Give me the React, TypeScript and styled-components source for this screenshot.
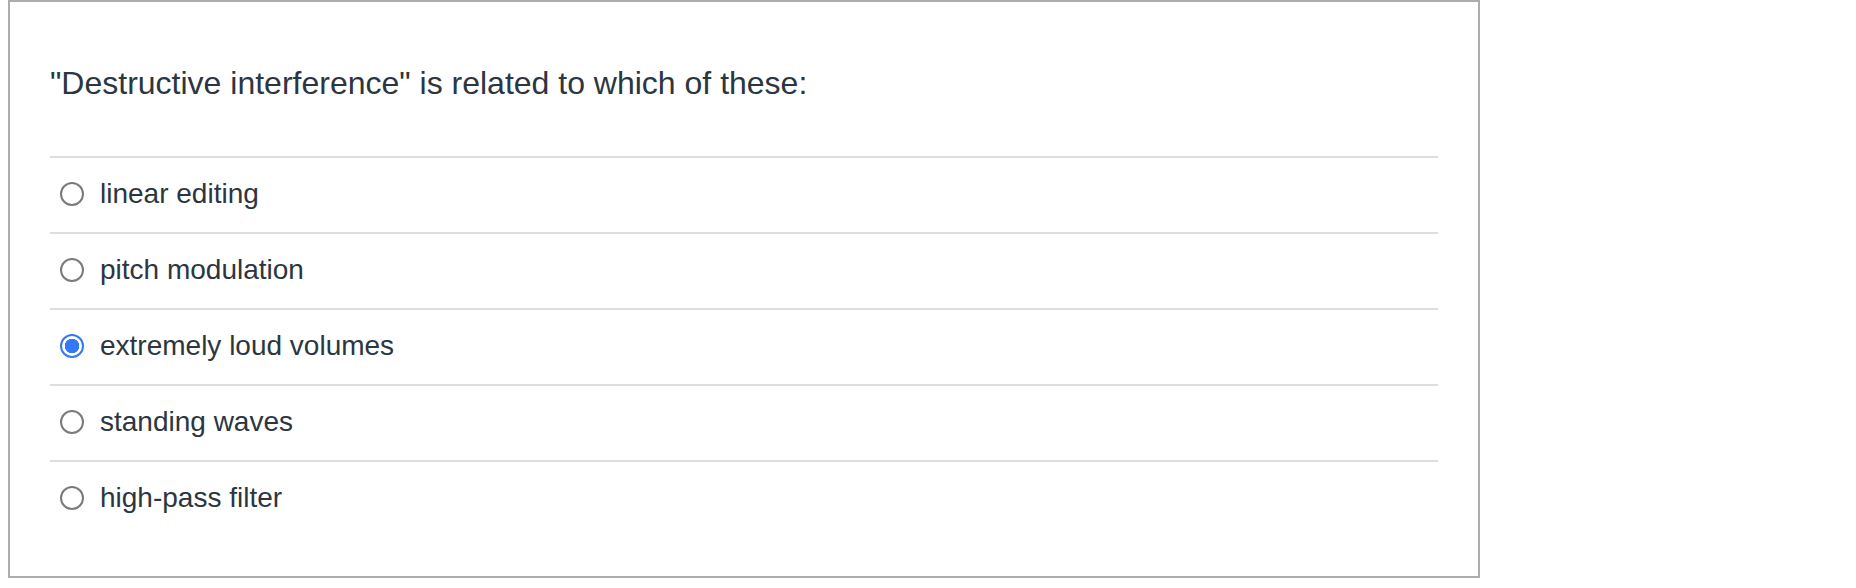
import React, { useState } from 'react';
import styled, { createGlobalStyle } from 'styled-components';

const GlobalStyle = createGlobalStyle`
  body {
    margin: 0 8px;
    background: #fff;
    font-family: "Liberation Sans", Helvetica, Arial, sans-serif;
  }
`;

const Card = styled.div`
  border: 2px solid #adadad;
  padding: 62px 40px 40px;
  height: 578px;
  box-sizing: border-box;
  width: 1472px;
`;

const Question = styled.p`
  margin: 0 0 54px;
  font-size: 32px;
  line-height: 38px;
  color: #2c3640;
`;

const OptionList = styled.div`
  display: flex;
  flex-direction: column;
`;

const OptionRow = styled.label`
  display: flex;
  align-items: center;
  gap: 16px;
  height: 76px;
  padding: 0 0 3px 10px;
  border-top: 2px solid #dddddd;
  box-sizing: border-box;
  font-size: 28px;
  color: #2c3640;
  cursor: pointer;
`;

const Radio = styled.input`
  appearance: none;
  margin: 0;
  width: 24px;
  height: 24px;
  border-radius: 50%;
  border: 2px solid #7a7a7a;
  box-sizing: border-box;
  flex-shrink: 0;
  background: #fff;

  &:checked {
    border-color: #3478f6;
    background: radial-gradient(circle, #3478f6 0 7px, #fff 7.5px);
  }
`;

const options = [
  'linear editing',
  'pitch modulation',
  'extremely loud volumes',
  'standing waves',
  'high-pass filter',
];

export default function App() {
  const [picked, setPicked] = useState(2);
  return (
    <>
      <GlobalStyle />
      <Card>
        <Question>"Destructive interference" is related to which of these:</Question>
        <OptionList>
          {options.map((text, i) => (
            <OptionRow key={text}>
              <Radio
                type="radio"
                name="answer"
                checked={picked === i}
                onChange={() => setPicked(i)}
              />
              {text}
            </OptionRow>
          ))}
        </OptionList>
      </Card>
    </>
  );
}
